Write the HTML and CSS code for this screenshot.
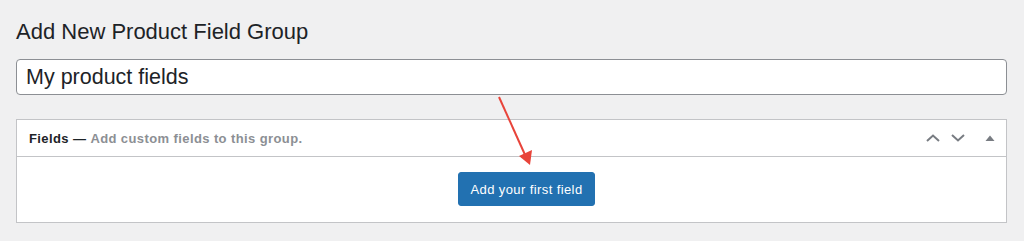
FILE: index.html
```html
<!DOCTYPE html>
<html lang="en">
<head>
    <meta charset="UTF-8">
    <title>Add New Product Field Group</title>
    <link rel="stylesheet" href="styles.css">
</head>
<body>
    <div class="wrap">
        <h1 class="page-title">Add New Product Field Group</h1>

        <input type="text" class="title-input" value="My product fields">

        <div class="postbox">
            <div class="postbox-header">
                <h2 class="postbox-title">Fields — <span class="postbox-desc">Add custom fields to this group.</span></h2>
                <div class="handle-actions">
                    <svg class="handle-icon" width="14" height="8" viewBox="0 0 14 8"><path d="M1 7 L7 1.5 L13 7" fill="none" stroke="#787c82" stroke-width="2"/></svg>
                    <svg class="handle-icon" width="14" height="8" viewBox="0 0 14 8"><path d="M1 1 L7 6.5 L13 1" fill="none" stroke="#787c82" stroke-width="2"/></svg>
                    <svg class="toggle-icon" width="10" height="6" viewBox="0 0 10 6"><path d="M0.5 6 L5 0.5 L9.5 6 Z" fill="#787c82"/></svg>
                </div>
            </div>
            <div class="postbox-body">
                <button class="button-primary">Add your first field</button>
            </div>
        </div>

        <!-- annotation arrow drawn over the page -->
        <svg class="arrow" width="60" height="80" viewBox="0 0 60 80">
            <line x1="4" y1="2" x2="31" y2="62" stroke="#e8443a" stroke-width="2"/>
            <path d="M24 61 L37 55 L35 70 Z" fill="#e8443a"/>
        </svg>
    </div>
</body>
</html>
```

FILE: styles.css
```css
* {
    margin: 0;
    padding: 0;
    box-sizing: border-box;
}

body {
    background: #f0f0f1;
    font-family: "Liberation Sans", Arial, sans-serif;
    color: #1d2327;
}

.wrap {
    position: relative;
    padding: 17px 17px 0 16px;
}

.page-title {
    font-size: 22px;
    font-weight: 400;
    line-height: 30px;
    color: #1d2327;
}

.title-input {
    display: block;
    width: 100%;
    height: 36px;
    margin-top: 12px;
    padding: 0 9px;
    font-family: inherit;
    font-size: 21.5px;
    color: #1d2327;
    background: #fff;
    border: 1px solid #8c8f94;
    border-radius: 4px;
}

.postbox {
    margin-top: 24px;
    background: #fff;
    border: 1px solid #c3c4c7;
}

.postbox-header {
    display: flex;
    align-items: center;
    justify-content: space-between;
    height: 37px;
    padding: 0 10px 0 12px;
    border-bottom: 1px solid #c3c4c7;
}

.postbox-title {
    font-size: 13px;
    font-weight: 700;
    letter-spacing: 0.4px;
    color: #1d2327;
}

.postbox-desc {
    font-weight: 600;
    color: #8c8f94;
}

.handle-actions {
    display: flex;
    align-items: center;
    gap: 11px;
}

.toggle-icon {
    margin-left: 9px;
    margin-right: 1px;
}

.postbox-body {
    display: flex;
    justify-content: center;
    padding: 15px 0 16px 30px;
}

.button-primary {
    width: 137px;
    height: 34px;
    font-family: inherit;
    font-size: 13px;
    letter-spacing: 0.4px;
    color: #fff;
    background: #2271b1;
    border: 1px solid #2271b1;
    border-radius: 3px;
}

.arrow {
    position: absolute;
    left: 495px;
    top: 95px;
}
```
